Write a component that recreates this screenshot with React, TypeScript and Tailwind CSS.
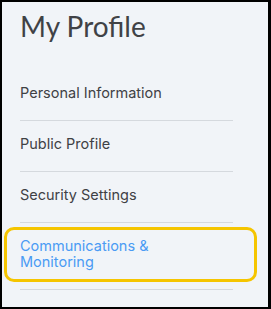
export default function App() {
  const items = ["Personal Information", "Public Profile", "Security Settings"];

  return (
    <div className="h-[309px] w-[271px] overflow-hidden bg-black pb-[2px] pl-[2px] pr-[3px] pt-[2px]">
      <div
        className="h-full w-full bg-[#f1f4f8]"
        style={{ fontFamily: "Inter, Lato, sans-serif" }}
      >
        <h1
          className="pl-[18px] pt-[7px] text-[28px] leading-[34px] text-[#404246]"
          style={{ fontFamily: "Lato, Inter, sans-serif" }}
        >
          My Profile
        </h1>

        <nav className="mt-[27px]">
          {items.map((item) => (
            <div key={item} className="ml-[18px] w-[213px] border-b border-[#d5d9de] pb-[17px] pt-[13px]">
              <span className="block text-[14.5px] leading-[20px] text-[#3f4145]">{item}</span>
            </div>
          ))}

          <div className="ml-[2px] mt-[4px] w-[253px] rounded-[10px] border-[3px] border-[#f5c500] pb-[9px] pl-[13px] pt-[8px]">
            <span className="block text-[14.5px] leading-[16px] text-[#4a9bf4]">
              Communications &amp;
              <br />
              Monitoring
            </span>
          </div>

          <div className="ml-[18px] mt-[7px] w-[213px] border-b border-[#d5d9de]" />
        </nav>
      </div>
    </div>
  );
}
